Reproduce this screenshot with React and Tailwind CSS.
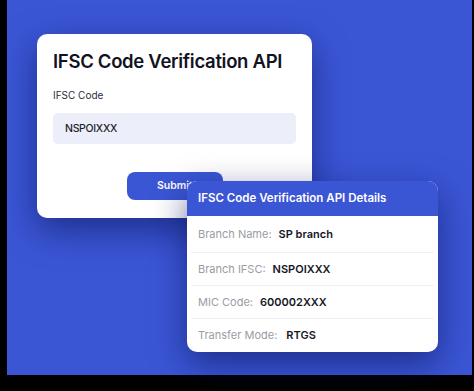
export default function App() {
  const rows = [
    ["Branch Name:", "SP branch"],
    ["Branch IFSC:", "NSPOIXXX"],
    ["MIC Code:", "600002XXX"],
    ["Transfer Mode:", "RTGS"],
  ];
  return (
    <div className="w-[474px] h-[391px] bg-black overflow-hidden" style={{ fontFamily: "Inter, 'Noto Sans', sans-serif" }}>
      <div className="relative ml-[7px] w-[465px] h-[375px] bg-[#3b56d5]">
        <div className="absolute left-[30px] top-[34px] w-[275px] h-[184px] bg-white rounded-[10px] shadow-[0_12px_34px_rgba(10,20,90,0.6)] px-[16px] pt-[15px]">
          <h1 className="text-[18.5px] whitespace-nowrap font-semibold text-[#111322] leading-[24px] tracking-[-0.3px]">IFSC Code Verification API</h1>
          <div className="mt-[15px] text-[10px] text-[#2a2d3a] leading-[14px]">IFSC Code</div>
          <div className="mt-[11px] w-[243px] h-[31px] bg-[#eceffa] rounded-[5px] flex items-center pl-[12px] text-[10.5px] tracking-[-0.3px] font-medium text-[#1c1e2b]">NSPOIXXX</div>
          <div className="mt-[28px] ml-[74px] w-[96px] h-[28px] bg-[#3b56d5] rounded-[8px] flex items-center pl-[30px] text-white text-[10.5px] font-semibold">Submit</div>
        </div>
        <div className="absolute left-[180px] top-[181px] w-[251px] h-[171px] bg-white rounded-[10px] overflow-hidden shadow-[0_12px_34px_rgba(10,20,90,0.6)]">
          <div className="h-[35px] bg-[#3b56d5] flex items-center pl-[11px] text-white text-[11.5px] font-semibold">IFSC Code Verification API Details</div>
          <div className="px-[4px]">
            {rows.map(([k, v], i) => (
              <div key={k} className={`flex items-center pl-[7px] text-[11px] ${i < 3 ? "border-b border-[#f0f1f4]" : ""} ${i === 0 ? "h-[37px]" : "h-[33px]"}`}>
                <span className="text-[#9a9ca5]">{k}</span>
                <span className={`${i === 3 ? "ml-[9px]" : "ml-[7px]"} font-semibold text-[#15171f] text-[11px]`}>{v}</span>
              </div>
            ))}
          </div>
        </div>
      </div>
    </div>
  );
}
